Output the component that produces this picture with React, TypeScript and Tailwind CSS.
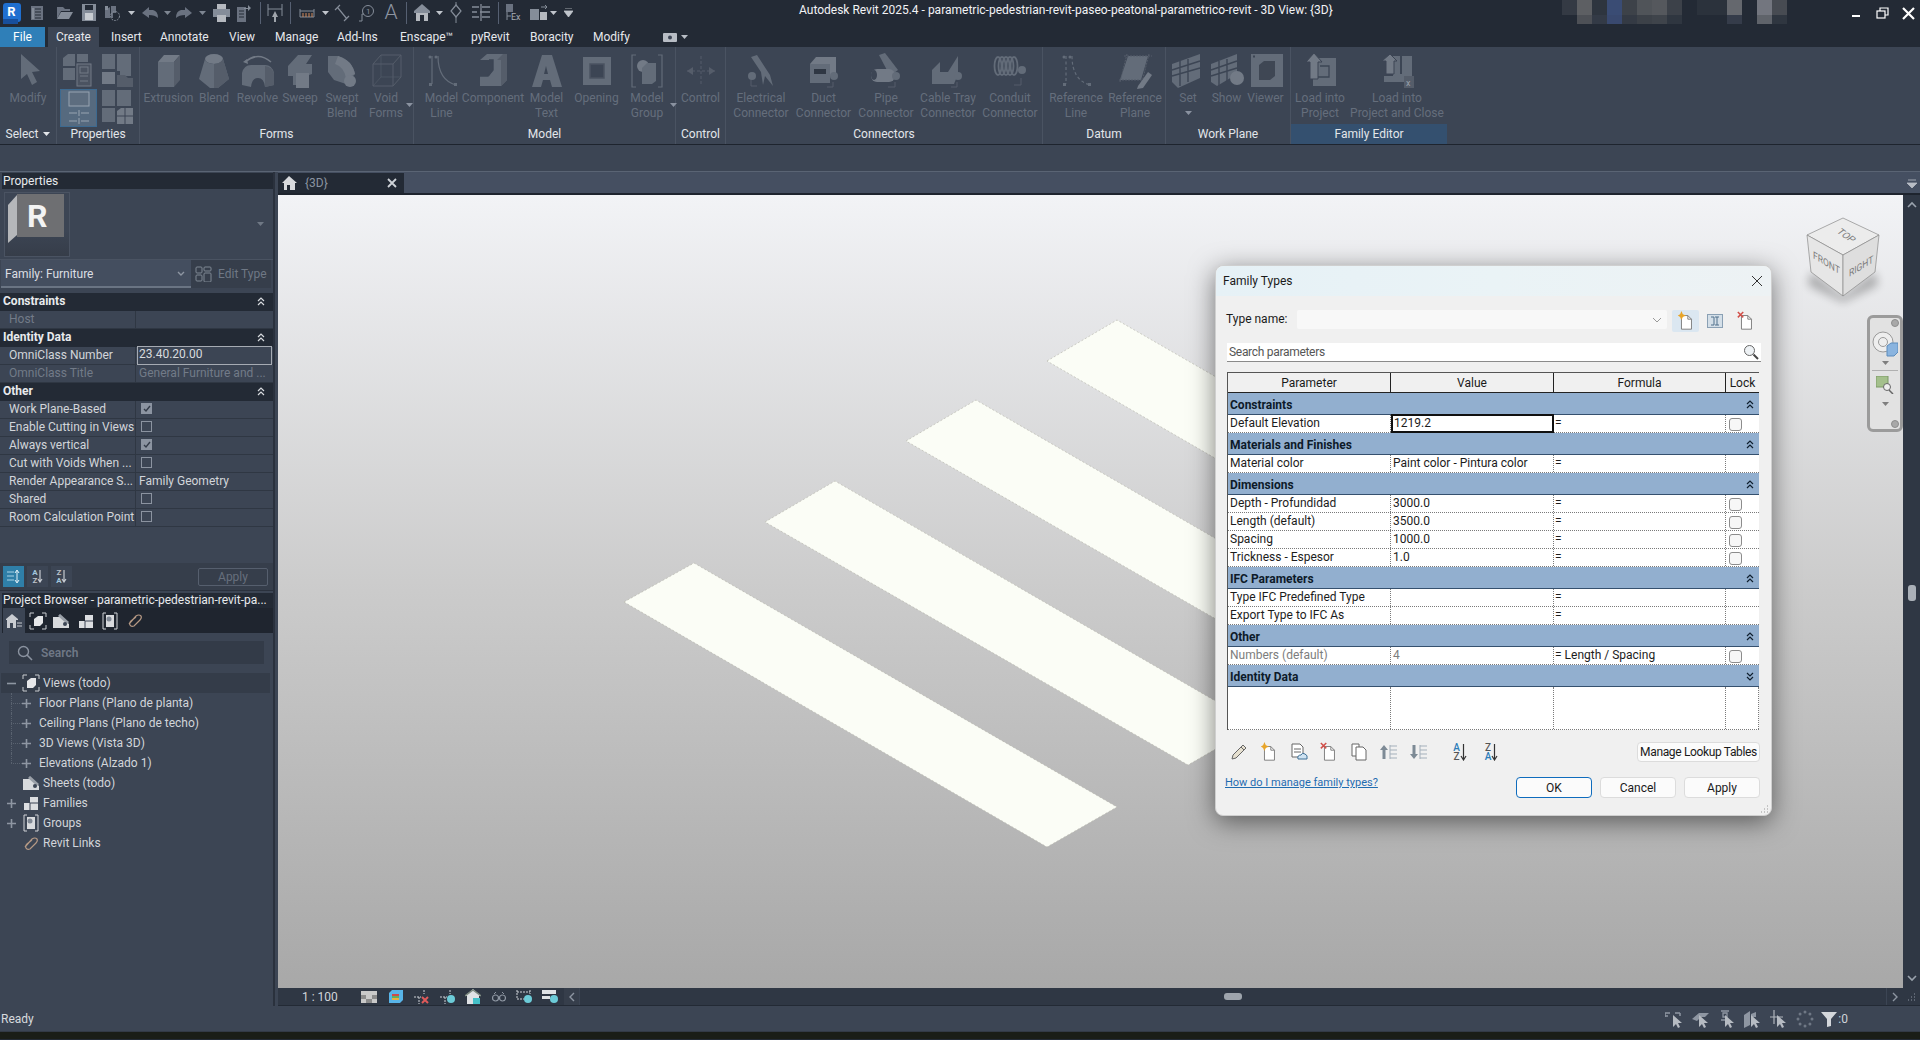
import React from "react";

type P = { children?: React.ReactNode; w?: number; h?: number; vb?: string; className?: string };
const S = ({ children, w = 18, h = 18, vb, className }: P) => (
  <svg width={w} height={h} viewBox={vb ?? `0 0 ${w} ${h}`} className={"shrink-0 " + (className ?? "")} fill="none">
    {children}
  </svg>
);

/* ---------- ribbon icons (disabled look) ---------- */
const A = "#636c79";
const B = "#555d6a";
const C = "#727a86";
const L = "#4b5361";

const IModify = () => (
  <S w={36} h={38}><path d="M11 2 V27 L17 22 L22 33 L27 30 L22 20 L30 19 Z" fill={A} /></S>
);
const IExtrusion = () => (
  <S w={36} h={38}><path d="M7 10 L13 3 H29 L23 10 Z" fill={C} /><path d="M7 10 H23 V35 H7 Z" fill={A} /><path d="M23 10 L29 3 V28 L23 35 Z" fill={B} /></S>
);
const IBlend = () => (
  <S w={36} h={38}><ellipse cx="18" cy="7" rx="9" ry="5" fill={C} /><path d="M9 7 L3 27 L14 36 H22 L33 27 L27 7 A9 5 0 0 1 9 7 Z" fill={A} /><path d="M18 12 V36 H22 L33 27 L27 7 Q24 12 18 12" fill={B} /></S>
);
const IRevolve = () => (
  <S w={38} h={38}><path d="M6 10 Q19 -1 32 10" stroke={C} strokeWidth="1.6" /><path d="M4 10 L8 7 L9 12 Z" fill={C} /><path d="M3 21 Q5 13 12 13 H26 Q33 13 35 21 V33 L26 35 Q25 26 19 26 Q13 26 12 35 L3 33 Z" fill={A} /><path d="M26 14 Q33 15 35 21 V33 L26 35 Z" fill={B} /></S>
);
const ISweep = () => (
  <S w={36} h={38}><path d="M6 14 L16 3 H30 L24 12 H30 L30 22 L18 26 V33 H11 V24 H6 Z" fill={A} /><rect x="14" y="21" width="13" height="15" fill={C} /></S>
);
const ISwept = () => (
  <S w={36} h={38}><path d="M4 4 H14 Q28 8 31 22 L22 32 L10 28 L4 20 Z" fill={A} /><path d="M14 4 Q28 8 31 22 L22 26 Q20 15 11 12 Z" fill={C} /><circle cx="26" cy="29" r="6" fill={C} /></S>
);
const IVoid = () => (
  <S w={36} h={38}><g stroke={B} strokeWidth="1"><path d="M5 12 H25 V34 H5 Z M5 12 L13 3 H33 V25 L25 34 M25 12 L33 3" /><path d="M13 3 V25 H33 M13 25 L5 34" strokeOpacity=".6" /></g></S>
);
const IModelLine = () => (
  <S w={36} h={38}><path d="M8 4 V32 M14 4 Q14 28 32 33" stroke={A} strokeWidth="1.2" /><circle cx="6" cy="5" r="1.5" fill={A} /><circle cx="12" cy="5" r="1.5" fill={A} /><rect x="5" y="31" width="3" height="3" fill={A} /><rect x="30" y="31" width="3" height="3" fill={A} /></S>
);
const IComponent = () => (
  <S w={36} h={38}><path d="M5 8 L12 2 H32 V28 L26 34 H5 V24 L14 24 L18 18 V8 Z" fill={A} /><path d="M22 8 L28 2 H32 V28 L26 34 V8 Z" fill={B} /><path d="M14 8 H18 V18 L13 24 H5" stroke="#3c4554" strokeWidth="1.4" fill="none" /></S>
);
const IModelText = () => (
  <S w={36} h={38}><path d="M13 3 H23 L33 35 H23 L21 28 H14 L12 35 H3 Z" fill={A} /><path d="M17 14 L19 22 H15 Z" fill="#3c4554" /></S>
);
const IOpening = () => (
  <S w={36} h={38}><rect x="4" y="5" width="28" height="28" fill={A} /><rect x="11" y="12" width="14" height="14" fill="#3c4554" stroke={L} strokeWidth="1.5" /></S>
);
const IModelGroup = () => (
  <S w={36} h={38}><path d="M7 3 H3 V35 H7 M29 3 H33 V35 H29" stroke={A} strokeWidth="1.2" /><circle cx="14" cy="14" r="6" fill={C} /><path d="M13 16 L18 11 H27 V29 L23 32 H13 Z" fill={A} /></S>
);
const IControl = () => (
  <S w={36} h={38}><path d="M18 4 V34 M4 19 H32" stroke={B} strokeWidth="1" strokeDasharray="3 2" /><path d="M4 19 L10 15 V23 Z M32 19 L26 15 V23 Z" fill={B} /></S>
);
const Dot = ({ x = 27, y = 23 }: { x?: number; y?: number }) => <circle cx={x} cy={y} r="4" fill={A} />;
const IElec = () => (
  <S w={36} h={38}><path d="M8 5 L14 3 L27 23 L30 34 L22 24 L20 33 L18 20 Z" fill={A} /><path d="M8 28 V34 H14" stroke={B} /><Dot x={9} y={24} /></S>
);
const IDuct = () => (
  <S w={36} h={38}><path d="M4 12 L10 5 H30 V24 H4 Z" fill={C} /><rect x="4" y="12" width="20" height="19" fill={A} /><rect x="8" y="17" width="12" height="5" fill="#2f3743" /><Dot x={28} y={24} /><path d="M27 30 V35 H21" stroke={B} /></S>
);
const IPipe = () => (
  <S w={36} h={38}><path d="M11 3 L17 1 L30 18 L22 24 Z" fill={A} /><rect x="3" y="17" width="24" height="13" rx="6" fill={C} /><ellipse cx="6" cy="23" rx="3" ry="5" fill="#3c4554" /><Dot x={28} y={24} /><path d="M27 30 V35 H20" stroke={B} /></S>
);
const ITray = () => (
  <S w={36} h={38}><path d="M2 32 V18 L10 10 V20 L18 20 L28 4 V22 L24 32 Z" fill={A} /><Dot x={28} y={24} /><path d="M27 30 V35 H21" stroke={B} /></S>
);
const IConduit = () => (
  <S w={36} h={38}><g stroke={A} strokeWidth="1.8">{[6, 10, 14, 18, 22].map((x) => <ellipse key={x} cx={x} cy="14" rx="3.5" ry="9" />)}</g><Dot x={30} y={18} /><path d="M29 26 V33 H22" stroke={B} /></S>
);
const IRefLine = () => (
  <S w={36} h={38}><path d="M8 4 V32 M14 4 Q14 28 32 33" stroke={A} strokeWidth="1.2" strokeDasharray="3 2.5" /><circle cx="6" cy="5" r="1.5" fill={A} /><circle cx="12" cy="5" r="1.5" fill={A} /><rect x="5" y="31" width="3" height="3" fill={A} /><rect x="30" y="31" width="3" height="3" fill={A} /></S>
);
const IRefPlane = () => (
  <S w={36} h={38}><path d="M11 4 H31 L24 28 H3 Z" fill={A} /><path d="M10 2 L3 30 M32 2 L25 30 M2 28 H28 M7 4 H35" stroke={B} strokeDasharray="2 1" /><path d="M21 34 L31 20 L35 23 L26 36 L20 37 Z" fill={C} /></S>
);
const ISet = () => (
  <S w={36} h={38}><path d="M2 12 L30 2 V26 L8 36 L2 30 Z" fill={A} /><path d="M2 18 L30 9 M2 24 L30 16 M10 9 V34 M18 7 V30" stroke="#3c4554" strokeWidth="1.4" /></S>
);
const IShow = () => (
  <S w={36} h={38}><path d="M2 12 L28 2 V22 L8 34 L2 30 Z" fill={A} /><path d="M2 18 L28 9 M2 24 L28 16 M10 9 V34 M18 7 V30" stroke="#3c4554" strokeWidth="1.4" /><circle cx="28" cy="26" r="7" fill={C} /></S>
);
const IViewer = () => (
  <S w={36} h={38}><rect x="3" y="2" width="32" height="33" fill={A} /><path d="M11 13 L16 9 H27 V24 L22 28 H11 Z" fill="#3f4754" /><rect x="5" y="3.5" width="2" height="2" fill="#3c4554" /></S>
);
const ILoad = () => (
  <S w={36} h={38}><path d="M11 6 H34 V34 H11 Z" fill={A} /><path d="M18 14 H27 V25 H14" stroke="#3c4554" strokeWidth="1.3" /><path d="M12 1 L20 10 H16 V27 H8 V10 H4 Z" fill={C} stroke="#3c4554" /></S>
);
const ILoadClose = () => (
  <S w={36} h={38}><path d="M14 4 H33 V30 H5 V24 H14 Z" fill={A} /><path d="M11 2 L18 9 H15 V22 H7 V9 H3 Z" fill={C} stroke="#3c4554" /><path d="M22 2 V22" stroke="#3c4554" strokeWidth="2" /><rect x="25" y="24" width="10" height="12" fill={B} /><text x="27" y="34" fontSize="9" fill="#98a0ab" fontFamily="Roboto">x</text></S>
);

const Caret = ({ c = "#9aa2ad", className }: { c?: string; className?: string }) => (
  <S w={7} h={4} className={className}><path d="M0 0 H7 L3.5 4 Z" fill={c} /></S>
);

type Btn = { w: string; l: string[]; i: React.ReactNode; caret?: boolean; below?: boolean };
const RibbonBtn = ({ w, l, i, caret, below }: Btn) => (
  <div className={w + " relative flex flex-col items-center pt-[5px] text-center leading-[15px] text-[#656e7c] whitespace-nowrap"}>
    <div className="h-[38px] flex items-center justify-center">{i}</div>
    <div className="mt-[1px]">{l[0]}</div>
    {l[1] && <div>{l[1]}</div>}
    {below && <Caret c="#8a92a0" className="mt-[5px]" />}
    {caret && <Caret c="#8a92a0" className="absolute right-[-4px] top-[56px]" />}
  </div>
);

const Panel = ({ w, title, pl, children, active }: { w: string; title: React.ReactNode; pl?: string; children?: React.ReactNode; active?: boolean }) => (
  <div className={w + " shrink-0 flex flex-col border-r border-[#4a5362] last:border-r-0"}>
    <div className={"h-[77px] flex " + (pl ?? "")}>{children}</div>
    <div className={"h-[20px] flex items-center justify-center pb-[1px] text-[#e3e6ea] " + (active ? "bg-[#34506f] " : "")}>{title}</div>
  </div>
);

const Ribbon = () => (
  <div className="h-[97px] bg-[#3c4554] flex">
    <Panel w="w-[57px]" title={<span className="flex items-center gap-[5px]">Select <Caret c="#e3e6ea" /></span>}>
      <RibbonBtn w="w-[56px]" l={["Modify"]} i={<IModify />} />
    </Panel>
    <Panel w="w-[83px]" title="Properties" pl="pl-[3px] pt-[5px]">
      <div className="grid grid-cols-[37px_39px] grid-rows-[37px_37px] w-[78px]">
        <S w={34} h={36}><path d="M3 6 L8 2 H15 V14 H3 Z M17 2 H28 V10 H17 Z M3 16 H15 V28 H3 Z" fill={A} /><rect x="17" y="12" width="14" height="22" fill={L} stroke={C} /><path d="M20 24 H28 M20 29 H28" stroke={C} /><rect x="20" y="15" width="8" height="6" stroke={C} /></S>
        <S w={34} h={36} className="ml-[3px]"><path d="M2 2 H15 V17 H2 Z M17 2 H31 V24 H20 V19 H2 V19 H17 Z" fill={A} /><path d="M2 20 H15 V32 H2 Z" fill={C} /><path d="M17 23 H25 L28 26 H33 V35 H17 Z" fill={B} /></S>
        <div className="w-[37px] h-[38px] bg-[#566a7f] border border-[#3d6a90] flex items-center justify-center">
          <S w={28} h={36}><rect x="4" y="2" width="20" height="14" stroke="#98a4b2" fill="#5d6d7f" /><path d="M4 23 H12 M16 23 H24 M4 31 H12 M16 31 H24 M14 20 V26 M14 28 V34" stroke="#98a4b2" /></S>
        </div>
        <S w={34} h={36} className="ml-[3px]"><path d="M2 1 H15 V17 H2 Z M17 1 H31 V17 H17 Z M2 19 H15 V33 H2 Z" fill={A} /><path d="M17 22 L21 19 H33 V35 H17 Z" fill={C} /><path d="M25 19 V35 M17 27 H33" stroke="#3c4554" /></S>
      </div>
    </Panel>
    <Panel w="w-[274px]" title="Forms" pl="pl-[5px]">
      <RibbonBtn w="w-[47px]" l={["Extrusion"]} i={<IExtrusion />} />
      <RibbonBtn w="w-[44px]" l={["Blend"]} i={<IBlend />} />
      <RibbonBtn w="w-[43px]" l={["Revolve"]} i={<IRevolve />} />
      <RibbonBtn w="w-[42px]" l={["Sweep"]} i={<ISweep />} />
      <RibbonBtn w="w-[42px]" l={["Swept", "Blend"]} i={<ISwept />} />
      <RibbonBtn w="w-[46px]" l={["Void", "Forms"]} i={<IVoid />} caret />
    </Panel>
    <Panel w="w-[262px]" title="Model" pl="pl-[4px]">
      <RibbonBtn w="w-[47px]" l={["Model", "Line"]} i={<IModelLine />} />
      <RibbonBtn w="w-[56px]" l={["Component"]} i={<IComponent />} />
      <RibbonBtn w="w-[51px]" l={["Model", "Text"]} i={<IModelText />} />
      <RibbonBtn w="w-[49px]" l={["Opening"]} i={<IOpening />} />
      <RibbonBtn w="w-[52px]" l={["Model", "Group"]} i={<IModelGroup />} caret />
    </Panel>
    <Panel w="w-[50px]" title="Control">
      <RibbonBtn w="w-[49px]" l={["Control"]} i={<IControl />} />
    </Panel>
    <Panel w="w-[317px]" title="Connectors" pl="pl-[4px]">
      <RibbonBtn w="w-[62px]" l={["Electrical", "Connector"]} i={<IElec />} />
      <RibbonBtn w="w-[63px]" l={["Duct", "Connector"]} i={<IDuct />} />
      <RibbonBtn w="w-[62px]" l={["Pipe", "Connector"]} i={<IPipe />} />
      <RibbonBtn w="w-[62px]" l={["Cable Tray", "Connector"]} i={<ITray />} />
      <RibbonBtn w="w-[62px]" l={["Conduit", "Connector"]} i={<IConduit />} />
    </Panel>
    <Panel w="w-[123px]" title="Datum" pl="pl-[4px]">
      <RibbonBtn w="w-[58px]" l={["Reference", "Line"]} i={<IRefLine />} />
      <RibbonBtn w="w-[60px]" l={["Reference", "Plane"]} i={<IRefPlane />} />
    </Panel>
    <Panel w="w-[125px]" title="Work Plane" pl="pl-[3px]">
      <RibbonBtn w="w-[38px]" l={["Set"]} i={<ISet />} below />
      <RibbonBtn w="w-[39px]" l={["Show"]} i={<IShow />} />
      <RibbonBtn w="w-[39px]" l={["Viewer"]} i={<IViewer />} />
    </Panel>
    <Panel w="w-[156px]" title="Family Editor" active pl="pl-[2px]">
      <RibbonBtn w="w-[54px]" l={["Load into", "Project"]} i={<ILoad />} />
      <RibbonBtn w="w-[100px]" l={["Load into", "Project and Close"]} i={<ILoadClose />} />
    </Panel>
  </div>
);

/* ---------- quick access toolbar ---------- */
const Q = "#858d99";
const Q2 = "#6a7280";
const Sep = () => <div className="w-[1px] h-[22px] bg-[#566072]" />;
const Dd = () => <Caret c="#c0c5cc" />;
const qat: [string, React.ReactNode][] = [
  ["w-[24px]", (
    <div className="relative w-[21px] h-[23px] -mt-[1px]">
      <div className="absolute left-[1px] top-[2px] w-[18px] h-[19px] rounded-[3px] bg-[#1f6fd0] flex items-center justify-center text-white font-bold text-[13px]">R</div>
      <div className="absolute left-[1px] bottom-0 w-[15px] h-[5px] bg-[#174f9c]" />
    </div>
  )],
  ["w-[26px]", <S w={14} h={16}><rect x="1" y="1" width="12" height="14" fill={Q2} /><path d="M5 4 H11 M5 7 H11 M5 10 H11 M5 13 H11" stroke="#232a35" /><rect x="2" y="3" width="2" height="11" fill={Q} /></S>],
  ["w-[27px]", <S w={18} h={15}><path d="M2 2 H8 L10 4 H15 V6 H6 L2 14 Z" fill={Q2} /><path d="M6 7 H18 L14 14 H2 Z" fill={Q} /></S>],
  ["w-[23px]", <S w={14} h={17}><path d="M0 0 H14 V17 H0 Z" fill={Q} /><rect x="3" y="1" width="8" height="5" fill="#232a35" /><rect x="3" y="9" width="8" height="7" fill="#c8ccd1" /></S>],
  ["w-[24px]", <S w={18} h={17}><path d="M2 14 V6 L7 3 V14 Z M8 14 V2 H13 V9 H10 V14 Z" fill={Q2} /><circle cx="12" cy="12" r="4.5" stroke={Q} strokeDasharray="2 1" /><path d="M2 2 H5 V6 H2 Z" fill={Q} /></S>],
  ["w-[14px]", <Dd />],
  ["w-[24px]", <S w={16} h={12}><path d="M0 6 L7 0 V3 H11 Q16 4 16 11 Q13 8 7 8 V11 Z" fill={Q2} /></S>],
  ["w-[10px]", <Caret c="#7e8692" />],
  ["w-[24px]", <S w={16} h={12}><path d="M16 6 L9 0 V3 H5 Q0 4 0 11 Q3 8 9 8 V11 Z" fill={Q2} /></S>],
  ["w-[12px]", <Caret c="#7e8692" />],
  ["w-[26px]", <S w={17} h={18}><rect x="4" y="0" width="9" height="5" fill="#b5b9bf" /><rect x="0" y="5" width="17" height="8" fill={Q} /><rect x="4" y="11" width="9" height="7" fill="#b5b9bf" /></S>],
  ["w-[18px]", <S w={16} h={18}><path d="M2 3 H11 V18 H2 Z" fill={Q2} /><path d="M4 7 H9 M4 10 H9 M4 13 H9" stroke="#232a35" /><path d="M9 4 H13 V1 L16 4 L13 7 V5 H9 Z" fill={Q} /></S>],
  ["w-[16px]", <Sep />],
  ["w-[14px]", <S w={16} h={20}><path d="M1 1 V13 M15 1 V13 M1 6 H15" stroke={Q} /><path d="M8 8 L11 14 H9 V19 H7 V14 H5 Z" fill="#a0a5ac" /></S>],
  ["w-[16px]", <Sep />],
  ["w-[18px]", <S w={16} h={10}><path d="M1 1 V9 H15 V1 M1 3 H15" stroke={Q} /><path d="M4 5 V9 M7 5 V9 M10 5 V9 M13 5 V9" stroke="#d48a5a" /></S>],
  ["w-[18px]", <Dd />],
  ["w-[16px]", <S w={16} h={18}><path d="M4 4 L13 15 M1 6 L6 1 M10 17 L15 12" stroke={Q} strokeWidth="1.2" /></S>],
  ["w-[32px]", <S w={16} h={18}><circle cx="10" cy="7" r="5.5" stroke={Q} /><path d="M1 17 H4 V10 L6 10" stroke={Q} /><text x="8" y="10" fontSize="8" fill={Q} fontFamily="Roboto">1</text></S>],
  ["w-[18px]", <span className="text-[#8d95a1] text-[21px] leading-none font-light">A</span>],
  ["w-[12px]", <Sep />],
  ["w-[20px]", <S w={16} h={17}><path d="M8 0 L16 7 V9 H0 V7 Z" fill={Q} /><path d="M2 9 H14 V17 H2 Z" fill="#b5b9bf" /><rect x="6" y="11" width="4" height="6" fill="#232a35" /></S>],
  ["w-[14px]", <Dd />],
  ["w-[20px]", <S w={12} h={21}><path d="M6 3 L11 9 L6 15 L1 9 Z" stroke={Q} strokeWidth="1.2" /><path d="M6 0 V3 M6 15 V21" stroke={Q} /></S>],
  ["w-[30px]", <S w={18} h={17}><path d="M0 3 H7 M10 3 H18 M0 8 H5 M8 8 H18 M0 13 H7 M10 13 H18 M9 0 V17" stroke={Q} strokeWidth="1.3" /></S>],
  ["w-[4px]", <Sep />],
  ["w-[26px]", <S w={16} h={17}><path d="M1 0 H8 V8 H1 Z" fill={Q2} /><path d="M2 8 V16 M2 12 H6" stroke={Q} /><text x="6" y="16" fontSize="9" fill="#a5abb3" fontFamily="Roboto">Ex</text></S>],
  ["w-[24px]", <S w={17} h={15}><path d="M0 4 H9 V15 H0 Z" fill={Q} /><path d="M10 7 H17 V15 H10 Z" fill="#b5b9bf" /><path d="M11 2 H17 M15 0 L17 2 L15 4" stroke={Q} /></S>],
  ["w-[6px]", <Dd />],
  ["w-[24px]", <S w={9} h={9}><path d="M1 0 H8 M0 3 H9 L4.5 9 Z" stroke="#c0c5cc" fill="#c0c5cc" strokeWidth=".8" /></S>],
];
const mosaic: [string, string][] = [
  ["#343a44", "#232a35"], ["#5d5f63", "#4d5056"], ["#2e353f", "#333a46"], ["#3a4c74", "#39496f"], ["#3d4249", "#343a44"],
  ["#505459", "#3c4148"], ["#55585d", "#3f444b"], ["#3c4149", "#2f3640"], ["#232a35", "#232a35"], ["#2b323c", "#232a35"],
  ["#2b323c", "#232a35"], ["#65686e", "#353c4a"], ["#232a35", "#232a35"], ["#73767f", "#5f636a"], ["#474b52", "#2f3640"],
];

const Title = () => (
  <div className="h-[47px] bg-[#232a35] flex flex-col">
    <div className="h-[27px] flex items-start">
      <div className="w-[580px] h-[25px] flex items-center shrink-0">
        {qat.map(([w, n], i) => (
          <div key={i} className={w + " shrink-0 flex justify-center items-center"}>{n}</div>
        ))}
      </div>
      <div className="ml-[219px] w-[560px] h-[20px] leading-[20px] text-[#f2f3f5] whitespace-nowrap">
        Autodesk Revit 2025.4 - parametric-pedestrian-revit-paseo-peatonal-parametrico-revit - 3D View: {"{3D}"}
      </div>
      <div className="ml-[203px] flex">
        {mosaic.map(([a, b], i) => (
          <div key={i} className="w-[15px] flex flex-col">
            <div className="h-[15px]" style={{ background: a }} />
            <div className="h-[9px]" style={{ background: b }} />
          </div>
        ))}
      </div>
      <div className="ml-[64px] flex items-center gap-[13px] h-[25px] pt-[1px]">
        <S w={12} h={12}><path d="M1 9 H9" stroke="#fff" strokeWidth="2" /></S>
        <S w={13} h={12}><rect x="1" y="4" width="8" height="7" stroke="#fff" strokeWidth="1.2" /><path d="M4 4 V1 H12 V8 H9" stroke="#fff" strokeWidth="1.2" /></S>
        <S w={13} h={13}><path d="M1 1 L12 12 M12 1 L1 12" stroke="#fff" strokeWidth="2.2" /></S>
      </div>
    </div>
    <div className="h-[20px] flex items-stretch text-[#e6e8ec]">
      <div className="w-[45px] bg-[#2f7fb8] text-white flex items-center justify-center">File</div>
      <div className="ml-[3px] w-[51px] bg-[#3c4554] flex items-center justify-center">Create</div>
      <div className="flex items-center pl-[12px] whitespace-nowrap">
        <span className="w-[49px]">Insert</span>
        <span className="w-[69px]">Annotate</span>
        <span className="w-[46px]">View</span>
        <span className="w-[62px]">Manage</span>
        <span className="w-[63px]">Add-Ins</span>
        <span className="w-[71px]">Enscape™</span>
        <span className="w-[59px]">pyRevit</span>
        <span className="w-[63px]">Boracity</span>
        <span className="w-[70px]">Modify</span>
        <span className="flex items-center gap-[4px]">
          <S w={14} h={10}><rect x="0" y="1" width="14" height="9" rx="1" fill="#b8bdc5" /><circle cx="7" cy="5.5" r="2" fill="#3c4554" /></S>
          <Caret c="#b8bdc5" />
        </span>
      </div>
    </div>
  </div>
);

/* ---------- left panels ---------- */
const Chev = ({ down, c = "#d8dbdf" }: { down?: boolean; c?: string }) => (
  <S w={8} h={9} className={down ? "rotate-180" : ""}><path d="M1 4 L4 1 L7 4 M1 8 L4 5 L7 8" stroke={c} strokeWidth="1.2" /></S>
);
const GroupHead = ({ t }: { t: string }) => (
  <div className="h-[18px] bg-[#232a35] flex items-center justify-between pl-[3px] pr-[8px] pb-[2px] font-bold text-[#e8eaed]">
    {t}
    <Chev />
  </div>
);
const Check = ({ on }: { on?: boolean }) =>
  on ? (
    <div className="w-[11px] h-[11px] bg-[#8c94a1] flex items-center justify-center mt-[2px]">
      <S w={9} h={9}><path d="M2 5 L4 7 L8 2" stroke="#343c49" strokeWidth="1.4" /></S>
    </div>
  ) : (
    <div className="w-[11px] h-[11px] border border-[#8b93a0] mt-[2px]" />
  );
const PRow = ({ k, v, dim, chk, box }: { k: string; v?: string; dim?: boolean; chk?: "on" | "off"; box?: boolean }) => (
  <div className="h-[18px] grid grid-cols-[136px_1fr] border-b border-[#2f3743]">
    <div className={"pl-[9px] leading-[16px] whitespace-nowrap overflow-hidden border-r border-[#2f3743] " + (dim ? "text-[#727b88]" : "text-[#d2d5da]")}>{k}</div>
    {box ? (
      <div className="border border-[#a6abb3] ml-[1px] mr-[1px] -my-[1px] pl-[1px] leading-[15px] text-[#d8dbdf] z-10">{v}</div>
    ) : chk ? (
      <div className="pl-[5px]"><Check on={chk === "on"} /></div>
    ) : (
      <div className={"pl-[3px] leading-[16px] whitespace-nowrap overflow-hidden " + (dim ? "text-[#727b88]" : "text-[#d2d5da]")}>{v}</div>
    )}
  </div>
);

const IcoCube = () => (
  <S w={18} h={18}><path d="M1 5 V1 H5 M13 1 H17 V5 M1 13 V17 H5 M13 17 H17 V13" stroke="#c9ccd1" /><path d="M5 7 L9 4 H14 V11 L11 14 H5 Z" fill="#e6e7e9" /></S>
);
const IcoSheet = () => (
  <S w={18} h={14}><path d="M1 3 H9 L17 10 L17 14 H1 Z" fill="#d8dadd" /><path d="M7 1 L16 9" stroke="#9aa0a8" strokeWidth="3" /><circle cx="13" cy="10" r="2" fill="#3c4554" /></S>
);
const IcoFam = () => (
  <S w={16} h={14}><path d="M1 7 H7 V1 H15 V14 H1 Z" fill="#dcdee1" /><path d="M7 7 H15" stroke="#3c4554" /><path d="M7 7 V14" stroke="#3c4554" /></S>
);
const IcoGroup = () => (
  <S w={16} h={18}><path d="M4 1 H1 V17 H4 M12 1 H15 V17 H12" stroke="#d0d3d7" /><rect x="4" y="3" width="8" height="12" fill="#d8dadd" /><circle cx="7" cy="7" r="2.5" fill="#808894" /></S>
);
const IcoLink = () => (
  <S w={16} h={13}><path d="M2 10 L9 2 Q12 0 14 2 Q15 4 13 6 L7 12 Q4 13 3 11 Q2 9 4 7 L9 3" stroke="#b79a85" strokeWidth="1.2" /></S>
);
const Plus = () => (
  <S w={9} h={9}><path d="M4.5 0 V9 M0 4.5 H9" stroke="#8e96a2" strokeWidth="1.6" /></S>
);

const TreeRow = ({ t, icon, plus, child, sel, minus, last }: { t: string; icon?: React.ReactNode; plus?: boolean; child?: boolean; sel?: boolean; minus?: boolean; last?: boolean }) => (
  <div className={"h-[20px] flex items-center text-[#d2d5da] whitespace-nowrap relative " + (sel ? "bg-[#343c49]" : "")}>
    {child && <div className={"absolute left-[10px] top-0 border-l border-dotted border-[#59626f] " + (last ? "h-[10px]" : "h-[20px]")} />}
    {child ? (
      <>
        <div className="w-[11px] ml-[10px] border-b border-dotted border-[#59626f]" />
        <Plus />
        <span className="ml-[8px]">{t}</span>
      </>
    ) : (
      <>
        <div className="w-[20px] flex justify-center">
          {plus && <Plus />}
          {minus && <S w={9} h={9}><path d="M0 4.5 H9" stroke="#8e96a2" strokeWidth="1.6" /></S>}
        </div>
        <div className="w-[20px] flex justify-center">{icon}</div>
        <span className="ml-[2px]">{t}</span>
      </>
    )}
  </div>
);

const LeftPanel = () => (
  <div className="w-[278px] shrink-0 flex bg-[#3c4554]">
    <div className="w-[273px] shrink-0 flex flex-col pt-[1px]">
      <div className="h-[16px] ml-[2px] bg-[#232a35] leading-[16px] pl-[1px] text-[#e8eaed]">Properties</div>
      <div className="h-[71px] flex items-center relative border-b border-[#4a5362]">
        <div className="ml-[4px] w-[66px] h-[65px] border border-[#4a5362] bg-[linear-gradient(180deg,#3c4554_60%,#363d49)] relative">
          <S w={60} h={50} className="absolute left-[2px] top-0"><path d="M1 12 L10 2 V42 L1 50 Z" fill="#b5b7ba" /><path d="M10 1 H57 V44 H10 Z" fill="#6e6f72" /></S>
          <div className="absolute left-[22px] top-[5px] text-[#f3f3f3] text-[32px] leading-[36px] font-bold">R</div>
        </div>
        <Caret c="#6f7885" className="ml-[187px]" />
      </div>
      <div className="h-[28px] flex">
        <div className="ml-[1px] w-[190px] bg-[#444e5f] border-b-2 border-[#6a7483] flex items-center justify-between pl-[4px] pr-[6px] pt-[1px] text-[#dcdfe3]">
          Family: Furniture
          <S w={8} h={5}><path d="M1 1 L4 4 L7 1" stroke="#8e96a2" strokeWidth="1.4" /></S>
        </div>
        <div className="w-[80px] bg-[#363e4b] flex items-center pl-[4px] gap-[6px] text-[#6f7885]">
          <S w={17} h={16}><rect x="1" y="1" width="6" height="6" rx="1" stroke="#7f8894" /><rect x="9" y="1" width="7" height="4" rx="1" stroke="#7f8894" /><rect x="1" y="9" width="6" height="6" rx="1" stroke="#7f8894" /><rect x="9" y="7" width="7" height="9" rx="1" stroke="#7f8894" /></S>
          Edit Type
        </div>
      </div>
      <div className="mt-[5px]">
        <GroupHead t="Constraints" />
        <PRow k="Host" dim />
        <GroupHead t="Identity Data" />
        <PRow k="OmniClass Number" v="23.40.20.00" box />
        <PRow k="OmniClass Title" v="General Furniture and ..." dim />
        <GroupHead t="Other" />
        <PRow k="Work Plane-Based" chk="on" />
        <PRow k="Enable Cutting in Views" chk="off" />
        <PRow k="Always vertical" chk="on" />
        <PRow k="Cut with Voids When ..." chk="off" />
        <PRow k="Render Appearance S..." v="Family Geometry" />
        <PRow k="Shared" chk="off" />
        <PRow k="Room Calculation Point" chk="off" />
      </div>
      <div className="h-[36px] shrink-0" />
      <div className="h-[27px] bg-[#363e4b] flex items-center pl-[3px] gap-[3px]">
        <div className="w-[21px] h-[21px] bg-[#2f7fa8] flex items-center justify-center">
          <S w={13} h={13}><path d="M0 2 H7 M0 6 H7 M0 10 H7" stroke="#a9d3e6" /><path d="M10 1 V12 M8 3 L10 0 L12 3 M8 10 L10 13 L12 10" stroke="#e4f2f8" /></S>
        </div>
        <div className="w-[21px] h-[21px] bg-[#3c4554] flex items-center justify-center text-[8px] leading-[8px] font-bold text-[#a3c6de]">
          <div className="flex flex-col items-center -mr-[1px]"><span>A</span><span className="text-[#bfc4cb]">Z</span></div>
          <S w={6} h={13}><path d="M3 0 V11 M1 9 L3 12 L5 9" stroke="#c5cad0" strokeWidth="1.2" /></S>
        </div>
        <div className="w-[21px] h-[21px] bg-[#3c4554] flex items-center justify-center text-[8px] leading-[8px] font-bold text-[#bfc4cb]">
          <div className="flex flex-col items-center -mr-[1px]"><span>Z</span><span className="text-[#a3c6de]">A</span></div>
          <S w={6} h={13}><path d="M3 0 V11 M1 9 L3 12 L5 9" stroke="#c5cad0" strokeWidth="1.2" /></S>
        </div>
        <div className="ml-[123px] w-[70px] h-[18px] rounded-[2px] border border-[#565f6e] flex items-center justify-center text-[#666f7d]">Apply</div>
      </div>
      <div className="h-[3px] shrink-0 border-t border-[#2a313d]" />
      <div className="h-[15px] ml-[2px] bg-[#232a35] leading-[15px] pl-[1px] text-[#e8eaed] whitespace-nowrap">Project Browser - parametric-pedestrian-revit-pa...</div>
      <div className="h-[25px] ml-[2px] bg-[#1f252f] flex items-stretch">
        <div className="w-[22px] ml-[1px] bg-[#3c4554] flex items-center justify-center">
          <S w={16} h={14}><path d="M6 0 L12 5 V6 H0 V5 Z" fill="#c9ccd1" /><path d="M1 6 H10 V14 H1 Z" fill="#c9ccd1" /><rect x="4" y="9" width="3" height="5" fill="#3c4554" /><path d="M11 9 H16 M11 12 H16" stroke="#c9ccd1" /></S>
        </div>
        <div className="flex items-center gap-[7px] ml-[4px]">
          <IcoCube />
          <div className="w-[16px] flex justify-center ml-[-1px]"><IcoSheet /></div>
          <div className="w-[16px] flex justify-center ml-[2px]"><IcoFam /></div>
          <div className="w-[16px] flex justify-center ml-[1px]"><IcoGroup /></div>
          <div className="ml-[2px]"><IcoLink /></div>
        </div>
      </div>
      <div className="mt-[8px] ml-[9px] w-[255px] h-[23px] bg-[#333b48] flex items-center pl-[8px] text-[#6f7886] font-semibold">
        <S w={16} h={16}><circle cx="6.5" cy="6.5" r="5" stroke="#8b93a0" strokeWidth="1.4" /><path d="M10 10 L15 15" stroke="#8b93a0" strokeWidth="1.6" /></S>
        <span className="ml-[8px]">Search</span>
      </div>
      <div className="mt-[9px] ml-[1px] w-[269px]">
        <TreeRow t="Views (todo)" icon={<IcoCube />} minus sel />
        <TreeRow t="Floor Plans (Plano de planta)" child />
        <TreeRow t="Ceiling Plans (Plano de techo)" child />
        <TreeRow t="3D Views (Vista 3D)" child />
        <TreeRow t="Elevations (Alzado 1)" child last />
        <TreeRow t="Sheets (todo)" icon={<IcoSheet />} />
        <TreeRow t="Families" icon={<IcoFam />} plus />
        <TreeRow t="Groups" icon={<IcoGroup />} plus />
        <TreeRow t="Revit Links" icon={<IcoLink />} />
      </div>
    </div>
    <div className="w-[2px] shrink-0 bg-[#2a313d]" />
  </div>
);

/* ---------- dialog ---------- */
const Dotted = "border-b border-dotted border-[#7a7a7a]";
const DGroup = ({ t, down }: { t: string; down?: boolean }) => (
  <div className="h-[22px] bg-[#92afcf] border-b border-[#35506e] flex items-center justify-between pl-[2px] pr-[5px] pt-[2px] font-bold text-[#0d1a29]">
    {t}
    <Chev c="#10202f" down={down} />
  </div>
);
const DCheck = () => <div className="w-[13px] h-[13px] rounded-[3px] border border-[#8c8c8c] bg-[#f7f7f7] mt-[3px]" />;
const DRow = ({ k, v, f, lock, dim, sel }: { k: string; v?: string; f?: string; lock?: boolean; dim?: boolean; sel?: boolean }) => (
  <div className={"h-[18px] grid grid-cols-[163px_163px_172px_33px] bg-white leading-[16px] text-[#1c1c1c] " + Dotted}>
    <div className={"pl-[2px] border-r border-dotted border-[#7a7a7a] " + (dim ? "text-[#7d7d7d]" : "")}>{k}</div>
    {sel ? (
      <div className="border-2 border-[#111] -my-[1px] pl-[1px] leading-[14px] h-[19px]">{v}</div>
    ) : (
      <div className={"pl-[2px] border-r border-dotted border-[#7a7a7a] " + (dim ? "text-[#7d7d7d]" : "")}>{v}</div>
    )}
    <div className="pl-[1px] border-r border-dotted border-[#7a7a7a]">{f ?? "="}</div>
    <div className="pl-[3px]">{lock && <DCheck />}</div>
  </div>
);
const Doc = () => (
  <>
    <path d="M4 5 H11 L15 9 V20 H4 Z" fill="#fff" stroke="#777" />
    <path d="M11 5 V9 H15" stroke="#777" />
  </>
);
const Head = ({ t, last }: { t: string; last?: boolean }) => (
  <div className={"flex items-center justify-center border-[#222] " + (last ? "" : "border-r")}>{t}</div>
);
const SortIcon = ({ a, b, ca, cb }: { a: string; b: string; ca: string; cb: string }) => (
  <div className="w-[18px] h-[20px] flex items-center justify-center text-[10px] leading-[9px] font-medium">
    <div className="flex flex-col items-center">
      <span style={{ color: ca }}>{a}</span>
      <span style={{ color: cb }}>{b}</span>
    </div>
    <S w={7} h={18}><path d="M3.5 1 V16 M1 13 L3.5 17 L6 13" stroke="#333" strokeWidth="1.2" /></S>
  </div>
);
const Dialog = () => (
  <div className="absolute left-[937px] top-[70px] w-[557px] h-[551px] rounded-[8px] bg-[#f0f0f0] border border-[#cfcfcf] shadow-[0_6px_26px_rgba(0,0,0,0.5)] text-[#1a1a1a] flex flex-col">
    <div className="h-[30px] shrink-0 rounded-t-[8px] bg-[linear-gradient(90deg,#e6f1f6,#eaf3f6_50%,#edf2f4)] flex items-center justify-between pl-[7px] pr-[8px]">
      <span>Family Types</span>
      <S w={12} h={12}><path d="M1 1 L11 11 M11 1 L1 11" stroke="#333" strokeWidth="1" /></S>
    </div>
    <div className="mt-[14px] h-[22px] flex items-start pl-[10px]">
      <span className="w-[71px] leading-[19px]">Type name:</span>
      <div className="w-[370px] h-[19px] bg-[#f8f8f8] rounded-[2px] flex items-center justify-end pr-[5px]">
        <S w={10} h={6}><path d="M1 1 L5 5 L9 1" stroke="#9a9a9a" /></S>
      </div>
      <div className="ml-[5px] w-[27px] h-[22px] bg-[#dbe7f1] rounded-[2px] flex items-center justify-center">
        <S w={18} h={20} vb="0 0 18 22"><Doc /><path d="M4 0 L5.5 3.5 L9 5 L5.5 6.5 L4 10 L2.5 6.5 L0 5 L2.5 3.5 Z" fill="#e8a52a" /></S>
      </div>
      <div className="ml-[6px] h-[22px] w-[20px] flex items-center justify-center">
        <S w={16} h={14}><rect x="0.5" y="0.5" width="15" height="13" fill="#d4dfe8" stroke="#8aa0b4" /><path d="M4 3 H7 V11 H4 M10 3 V11 M8 3 H12 M8 11 H12" stroke="#50708c" /></S>
      </div>
      <div className="ml-[11px] h-[22px] w-[20px] flex items-center justify-center">
        <S w={18} h={20} vb="0 0 18 22"><Doc /><path d="M0 1 L6 7 M6 1 L0 7" stroke="#d2504a" strokeWidth="1.6" /></S>
      </div>
    </div>
    <div className="mt-[11px] ml-[11px] w-[534px] h-[19px] bg-white border-b border-[#8a8a8a] flex items-center justify-between pl-[2px] pr-[2px]">
      <span className="text-[#565656] tracking-[-0.3px] -mt-[1px]">Search parameters</span>
      <S w={16} h={16}><circle cx="6.5" cy="6.5" r="5" stroke="#666" fill="#eef2f5" /><path d="M10.5 10.5 L15 15" stroke="#444" strokeWidth="2" /></S>
    </div>
    <div className="mt-[10px] ml-[11px] w-[532px] h-[358px] border-l border-t border-[#555] flex flex-col">
      <div className="h-[20px] shrink-0 bg-[#f0f0f0] grid grid-cols-[163px_163px_172px_33px] border-b border-[#222]">
        <Head t="Parameter" />
        <Head t="Value" />
        <Head t="Formula" />
        <Head t="Lock" last />
      </div>
      <DGroup t="Constraints" />
      <DRow k="Default Elevation" v="1219.2" lock sel />
      <DGroup t="Materials and Finishes" />
      <DRow k="Material color" v="Paint color - Pintura color" />
      <DGroup t="Dimensions" />
      <DRow k="Depth - Profundidad" v="3000.0" lock />
      <DRow k="Length (default)" v="3500.0" lock />
      <DRow k="Spacing" v="1000.0" lock />
      <DRow k="Trickness - Espesor" v="1.0" lock />
      <DGroup t="IFC Parameters" />
      <DRow k="Type IFC Predefined Type" />
      <DRow k="Export Type to IFC As" />
      <DGroup t="Other" />
      <DRow k="Numbers (default)" v="4" f="= Length / Spacing" lock dim />
      <DGroup t="Identity Data" down />
      <div className="flex-1 grid grid-cols-[163px_163px_172px_33px] bg-white border-b border-dotted border-[#7a7a7a]">
        <div className="border-r border-dotted border-[#7a7a7a]" />
        <div className="border-r border-dotted border-[#7a7a7a]" />
        <div className="border-r border-dotted border-[#7a7a7a]" />
        <div className="border-r border-dotted border-[#7a7a7a]" />
      </div>
    </div>
    <div className="mt-[12px] h-[20px] flex items-center pl-[13px]">
      <div className="w-[30px] flex justify-center -ml-[5px]">
        <S w={18} h={18}><path d="M2 16 L3 12 L13 2 L16 5 L6 15 Z" fill="#e6e0d0" stroke="#666" /><path d="M11 4 L14 7" stroke="#666" /></S>
      </div>
      <div className="w-[30px] flex justify-center">
        <S w={18} h={20} vb="0 0 18 22"><Doc /><path d="M4 0 L5.5 3.5 L9 5 L5.5 6.5 L4 10 L2.5 6.5 L0 5 L2.5 3.5 Z" fill="#e8a52a" /></S>
      </div>
      <div className="w-[30px] flex justify-center">
        <S w={18} h={18}><path d="M2 1 H10 L13 4 V14 H2 Z" fill="#fff" stroke="#666" /><path d="M4 6 H11 M4 9 H11" stroke="#666" /><path d="M8 16 Q7 12 11 12 Q12 9 15 11 Q18 12 17 16 Z" fill="#cfe3f2" stroke="#3d6f96" /></S>
      </div>
      <div className="w-[30px] flex justify-center">
        <S w={18} h={20} vb="0 0 18 22"><Doc /><path d="M0 1 L6 7 M6 1 L0 7" stroke="#d2504a" strokeWidth="1.6" /></S>
      </div>
      <div className="w-[30px] flex justify-center">
        <S w={18} h={18}><path d="M2 1 H9 V13 H2 Z" fill="#fff" stroke="#666" /><path d="M6 4 H13 L16 7 V17 H6 Z" fill="#fff" stroke="#666" /></S>
      </div>
      <div className="w-[30px] flex justify-center">
        <S w={18} h={16}><path d="M4 1 L8 6 H5.5 V15 H2.5 V6 H0 Z" fill="#7d8a95" /><path d="M10 2 H17 M10 6 H17 M10 10 H17 M10 14 H17 M10 1 V15" stroke="#a4b0bb" /></S>
      </div>
      <div className="w-[30px] flex justify-center">
        <S w={18} h={16}><path d="M4 15 L8 10 H5.5 V1 H2.5 V10 H0 Z" fill="#7d8a95" /><path d="M10 2 H17 M10 6 H17 M10 10 H17 M10 14 H17 M10 1 V15" stroke="#a4b0bb" /></S>
      </div>
      <div className="w-[43px] flex justify-end pr-[8px]"><SortIcon a="A" b="Z" ca="#2b7cb8" cb="#555" /></div>
      <div className="w-[29px] flex justify-center"><SortIcon a="Z" b="A" ca="#555" cb="#2b7cb8" /></div>
      <div className="ml-[131px] w-[123px] h-[20px] shrink-0 bg-[#fbfbfb] border border-[#dcdcdc] rounded-[4px] flex items-center justify-center whitespace-nowrap tracking-[-0.35px]">Manage Lookup Tables</div>
    </div>
    <div className="mt-[15px] h-[21px] flex items-start pl-[9px]">
      <span className="w-[291px] text-[#1f6cb0] underline leading-[14px] -mt-[1px] whitespace-nowrap text-[11px]">How do I manage family types?</span>
      <div className="w-[76px] h-[21px] bg-[#fbfbfb] border border-[#0f6cbd] rounded-[4px] flex items-center justify-center">OK</div>
      <div className="ml-[8px] w-[76px] h-[21px] bg-[#fbfbfb] border border-[#dcdcdc] rounded-[4px] flex items-center justify-center">Cancel</div>
      <div className="ml-[8px] w-[76px] h-[21px] bg-[#fbfbfb] border border-[#dcdcdc] rounded-[4px] flex items-center justify-center">Apply</div>
    </div>
    <S w={8} h={8} className="absolute right-[2px] bottom-[2px]"><path d="M6 1 H7 M3 4 H4 M6 4 H7 M0 7 H1 M3 7 H4 M6 7 H7" stroke="#999" /></S>
  </div>
);

/* ---------- viewport ---------- */
const stripes = [
  "624,602 694,563 1117,807 1047,847",
  "765,522 835,481 1257,725 1188,765",
  "906,441 976,400 1398,644 1329,684",
  "1047,361 1117,320 1539,563 1469,605",
];
const Cube = () => (
  <S w={100} h={105} vb="1795 205 100 105" className="absolute left-[1517px] top-[10px]">
    <defs>
      <filter id="bl" x="-30%" y="-30%" width="160%" height="160%"><feGaussianBlur stdDeviation="5" /></filter>
    </defs>
    <path d="M1811 272 L1843 296 L1875 272 L1878 285 L1843 302 L1808 285 Z" fill="#000" opacity=".28" filter="url(#bl)" />
    <path d="M1843 218 L1879 235 L1843 255 L1807 235 Z" fill="#ececec" stroke="#8a8a8a" strokeWidth=".7" />
    <path d="M1807 235 L1843 255 V296 L1811 272 Z" fill="#e6e6e6" stroke="#8a8a8a" strokeWidth=".7" />
    <path d="M1879 235 L1843 255 V296 L1875 272 Z" fill="#dedede" stroke="#8a8a8a" strokeWidth=".7" />
    <g fill="#7d7d7d" fontFamily="Roboto" fontSize="10">
      <text transform="matrix(.8 .58 -.8 .58 1836 232)">TOP</text>
      <text transform="matrix(.85 .52 0 1 1813 258)">FRONT</text>
      <text transform="matrix(.85 -.52 0 1 1849 277)">RIGHT</text>
    </g>
  </S>
);
const NavBar = () => (
  <div className="absolute left-[1589px] top-[120px] w-[36px] h-[117px] rounded-[6px] border-[3px] border-[#9b9b9b] bg-[#e2e2e2] flex flex-col items-center">
    <div className="self-end mr-[1px] mt-[1px] w-[8px] h-[8px] rounded-full bg-[#a8a8a8] border border-[#8c8c8c]" />
    <S w={26} h={26} className="mt-[4px]"><circle cx="11" cy="11" r="10" stroke="#9a9a9a" fill="#eee" /><circle cx="11" cy="11" r="4.5" stroke="#9a9a9a" /><path d="M15 15 L19 12 H26 V21 L22 25 H15 Z" fill="#8ab4df" stroke="#5c8cbc" /></S>
    <Caret c="#7f7f7f" className="mt-[4px]" />
    <div className="w-[26px] h-[1px] bg-[#b0b0b0] mt-[5px]" />
    <S w={18} h={18} className="mt-[5px]"><rect x="0" y="0" width="12" height="11" fill="#a4c08c" stroke="#7d9a66" /><circle cx="11" cy="11" r="3.5" stroke="#666" fill="#eee" /><path d="M13 14 L17 18" stroke="#666" strokeWidth="1.5" /></S>
    <Caret c="#7f7f7f" className="mt-[8px]" />
    <div className="self-end mr-[1px] mt-auto mb-[1px] w-[8px] h-[8px] rounded-full bg-[#a8a8a8] border border-[#8c8c8c]" />
  </div>
);

const viewIcons: React.ReactNode[] = [
  <S w={16} h={12}><rect width="16" height="12" fill="#c9c9c9" /><path d="M0 4 H5 V8 H11 V4 H16 V8 H11 V12 H5 V8 H0 Z" fill="#8b8b8b" /></S>,
  <S w={15} h={15}><path d="M1 4 L4 1 H15 V11 L12 14 H1 Z" fill="#58b4e8" /><rect x="4" y="5" width="7" height="2" fill="#d04a4a" /><rect x="4" y="7" width="7" height="2" fill="#60b060" /><rect x="4" y="9" width="7" height="2" fill="#e8b040" /></S>,
  <S w={16} h={16}><path d="M1 8 H8 M6 8 V15 M11 1 V5" stroke="#cfd3d8" strokeDasharray="2 1" /><path d="M9 8 L15 14 M15 8 L9 14" stroke="#e05a5a" strokeWidth="2" /></S>,
  <S w={16} h={16}><path d="M1 8 H8 M6 8 V15 M11 1 V5" stroke="#cfd3d8" strokeDasharray="2 1" /><circle cx="12" cy="10" r="4" fill="#6ccbd8" /></S>,
  <S w={16} h={16}><path d="M8 0 L16 7 H14 V15 H2 V7 H0 Z" fill="#dfe2e5" /><path d="M0 7 L8 1 L16 7" stroke="#7d8a80" strokeWidth="1.5" /><rect x="8" y="9" width="7" height="6" fill="#44c0c8" /></S>,
  <S w={14} h={10}><circle cx="3.5" cy="6" r="3" stroke="#8e96a2" strokeWidth="1.2" /><circle cx="10.5" cy="6" r="3" stroke="#8e96a2" strokeWidth="1.2" /><path d="M6 5 H8 M2 2 L4 0 M10 0 L12 2" stroke="#8e96a2" /></S>,
  <S w={18} h={16}><path d="M1 1 V10 H8 M1 3 H14 M14 1 V5" stroke="#cfd3d8" strokeDasharray="2 1" /><circle cx="12" cy="10" r="4" fill="#6ccbd8" /></S>,
  <S w={18} h={16}><rect x="0" y="1" width="14" height="4" fill="#dfe2e5" /><rect x="0" y="7" width="8" height="3" fill="#dfe2e5" /><circle cx="12" cy="10" r="4" fill="#6ccbd8" /></S>,
];
const ViewBar = () => (
  <div className="h-[18px] bg-[#2f3744] flex items-center text-[#d2d5da] border-b border-[#232a35]">
    <span className="ml-[24px] w-[54px]">1 : 100</span>
    <div className="flex items-center">
      {viewIcons.map((n, i) => (
        <div key={i} className="w-[26px] flex justify-center">{n}</div>
      ))}
    </div>
    <div className="w-[16px] h-[17px] bg-[#363e4b] flex items-center justify-center border-r border-[#3c4554]">
      <S w={6} h={10}><path d="M5 1 L1 5 L5 9" stroke="#8e96a2" strokeWidth="1.4" /></S>
    </div>
    <div className="ml-[644px] w-[18px] h-[7px] rounded-[3px] bg-[#9ea4ac]" />
    <div className="ml-auto flex items-center">
      <div className="w-[17px] h-[17px] flex items-center justify-center border-l border-[#3c4554]">
        <S w={6} h={10}><path d="M1 1 L5 5 L1 9" stroke="#8e96a2" strokeWidth="1.4" /></S>
      </div>
      <div className="w-[17px] flex justify-center"><S w={8} h={8}><path d="M6 1 H7 M3 4 H4 M6 4 H7 M0 7 H1 M3 7 H4 M6 7 H7" stroke="#8e96a2" /></S></div>
    </div>
  </div>
);
const CursorI = ({ children }: { children?: React.ReactNode }) => (
  <S w={20} h={20}>
    {children}
    <path d="M8 6 V18 L11 15 L13 19 L15 18 L13 14 L17 14 Z" fill="#b6bbc2" />
  </S>
);

const Status = () => (
  <div className="h-[26px] bg-[#3c4554] border-b border-[#333a46] flex items-center text-[#d8dbdf]">
    <span className="ml-[1px]">Ready</span>
    <div className="ml-auto flex items-center pr-[72px]">
      <div className="flex items-center gap-[6px]">
        <CursorI><path d="M0 4 H5 M10 4 H15 M0 7 H3 M0 4 V8 M15 4 V7" stroke="#8e96a2" strokeWidth="1.5" /></CursorI>
        <CursorI><path d="M1 10 L8 4 H18 L14 8 H10 L6 12 Z" fill="#8e96a2" /></CursorI>
        <CursorI><path d="M4 2 H12 M6 4 H10 V8 H6 Z M4 11 H12" stroke="#8e96a2" strokeWidth="1.3" /></CursorI>
        <CursorI><path d="M1 6 L7 2 V16 L1 19 Z M8 5 L13 3 V8 H8 Z" fill="#8e96a2" /></CursorI>
        <CursorI><path d="M5 1 V15 M1 8 H14" stroke="#b0b5bc" strokeWidth="1.2" /></CursorI>
        <S w={20} h={20}><g fill="#6f7885">{[0, 45, 90, 135, 180, 225, 270, 315].map((a) => (<circle key={a} cx={10 + 7 * Math.cos((a * Math.PI) / 180)} cy={10 + 7 * Math.sin((a * Math.PI) / 180)} r="1.5" />))}</g></S>
        <div className="flex items-center">
          <S w={16} h={16}><path d="M0 1 H16 L10 8 V15 L6 16 V8 Z" fill="#d4d7db" /></S>
          <span className="ml-[1px] text-[#cfd3d8]">:0</span>
        </div>
      </div>
    </div>
  </div>
);

export default function App() {
  return (
    <div className="w-[1920px] h-[1040px] overflow-hidden flex flex-col bg-[#232a35] font-['Roboto',sans-serif] text-[12px]">
      <Title />
      <Ribbon />
      <div className="h-[1px] bg-[#1e242e]" />
      <div className="h-[26px] bg-[#3c4554]" />
      <div className="h-[1px] bg-[#5a6474]" />
      <div className="h-[834px] flex">
        <LeftPanel />
        <div className="flex-1 flex flex-col min-w-0">
          <div className="h-[21px] shrink-0 bg-[#454f61] flex items-stretch justify-between border-t border-[#454f61]">
            <div className="w-[126px] bg-[#232a35] flex items-center">
              <S w={15} h={14} className="ml-[4px]"><path d="M7 0 L15 7 H13 V14 H2 V7 H0 Z" fill="#d8dadd" /><rect x="5" y="9" width="3" height="5" fill="#232a35" /></S>
              <span className="ml-[8px] text-[#8a93a0]">{"{3D}"}</span>
              <S w={10} h={10} className="ml-[59px]"><path d="M1 1 L9 9 M9 1 L1 9" stroke="#cfd3d8" strokeWidth="1.8" /></S>
            </div>
            <div className="w-[17px] flex items-center justify-center"><S w={10} h={9}><path d="M1 1 H9 M0 4 H10 L5 9 Z" stroke="#b8bdc5" fill="#b8bdc5" strokeWidth=".8" /></S></div>
          </div>
          <div className="h-[2px] shrink-0 bg-[#1e242e]" />
          <div className="flex-1 flex min-h-0">
            <div className="relative flex-1 bg-[linear-gradient(180deg,#f2f3f6_0%,#cbcbcb_50%,#a8a8a8_100%)] overflow-hidden">
              <svg className="absolute inset-0 w-full h-full" viewBox="278 195 1625 793">
                {stripes.map((p) => (
                  <polygon key={p} points={p} fill="#fbfdf6" stroke="#b4b4a8" strokeWidth=".6" strokeDasharray="2 2" />
                ))}
              </svg>
              <Cube />
              <NavBar />
              <Dialog />
            </div>
            <div className="w-[17px] shrink-0 bg-[#2f3744] flex flex-col items-center justify-between py-[6px] relative">
              <S w={10} h={7}><path d="M1 6 L5 2 L9 6" stroke="#9aa2ad" strokeWidth="1.6" /></S>
              <div className="absolute left-[5px] top-[390px] w-[8px] h-[16px] rounded-[3px] bg-[#aab0b8]" />
              <S w={10} h={7}><path d="M1 1 L5 5 L9 1" stroke="#9aa2ad" strokeWidth="1.6" /></S>
            </div>
          </div>
          <ViewBar />
        </div>
      </div>
      <Status />
      <div className="h-[7px] bg-[#1a1d17]" />
    </div>
  );
}
